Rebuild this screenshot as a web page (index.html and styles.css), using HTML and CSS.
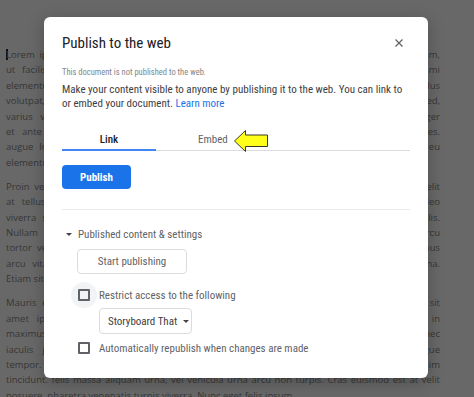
FILE: index.html
```html
<!DOCTYPE html>
<html lang="en">
<head>
  <meta charset="UTF-8">
  <meta name="viewport" content="width=device-width, initial-scale=1.0">
  <title>Publish to the web</title>
  <link rel="stylesheet" href="styles.css">
</head>
<body>
  <div class="doc">
    <p>
      <span class="ln"><span class="cursor"></span>Lorem ipsum dolor sit amet, consectetur adipiscing elit. Nam tincidunt leo vel nunc condim,</span>
      <span class="ln">ut facilisis ligula tristique. Vivamus sagittis dui nec justo faucibus, quis posuere nisl mi</span>
      <span class="ln">elementum. Donec a sapien non massa interdum ullamcorper in et nunc. Cras porttitor tellus</span>
      <span class="ln">volutpat, ut aliquet mauris pellentesque. Suspendisse potenti. Integer ligula vitae orci sed,</span>
      <span class="ln">varius vitae magna. Pellentesque habitant morbi tristique senectus et netus et integer</span>
      <span class="ln">et ante sit amet libero commodo viverra. Praesent dictum rhoncus lorem, et ultricies.</span>
      <span class="ln">augue lorem, sagittis vel aliquet in, fringilla at nunc. Sed eu enim vel sem tempor id eu</span>
      <span class="ln last">elementum nisi.</span>
    </p>
    <p>
      <span class="ln">Proin vel massa eu nisi dictum pulvinar. Maecenas iaculis libero eu magna, non pretium elit</span>
      <span class="ln">at tellus sodales. Morbi consequat dui ut metus vulputate, vitae ultrices felis vitae leo</span>
      <span class="ln">viverra sem. Quisque eleifend augue non lorem venenatis, et vestibulum mi. Nam mollis.</span>
      <span class="ln">Nullam ac posuere neque. Duis vitae sapien a lectus sodales euismod, id volutpat arcu</span>
      <span class="ln">tortor vel dolor. Curabitur nec lacus sed erat tincidunt dictum. Sed vitae augue non finibus</span>
      <span class="ln">arcu vitae nulla. Aliquam erat volutpat. Integer eget sem in nibh fermentum ut magna.</span>
      <span class="ln last">Etiam sit amet dictum ipsum.</span>
    </p>
    <p>
      <span class="ln">Mauris euismod, turpis vitae ullamcorper placerat, nibh quam tristique est, vitae dolor sit</span>
      <span class="ln">amet ipsum. Sed quis nisi at velit scelerisque venenatis. Nulla facilisi. Fusce sem in</span>
      <span class="ln">maximus nunc. Phasellus condimentum orci non justo gravida, in cursus enim. Donec</span>
      <span class="ln">iaculis justo vitae tellus consequat, sed ultricies mi porta. In hac habitasse augue</span>
      <span class="ln">tempor. Vivamus dignissim lectus vel urna lacinia, vitae euismod lectus. Aenean dignissim</span>
      <span class="ln">tincidunt. felis massa aliquam urna, vel vehicula urna arcu non turpis. Cras euismod est at velit</span>
      <span class="ln last">posuere, pharetra venenatis turpis viverra. Nunc eget felis ipsum.</span>
    </p>
  </div>

  <div class="dialog">
    <div class="dialog-header">
      <h1>Publish to the web</h1>
      <button class="close-btn" aria-label="Close">
        <svg width="8" height="8" viewBox="0 0 8 8"><path d="M0.5 0.5 L7.5 7.5 M7.5 0.5 L0.5 7.5" stroke="#5f6368" stroke-width="1.3" fill="none"/></svg>
      </button>
    </div>
    <div class="notice">This document is not published to the web.</div>
    <p class="desc">Make your content visible to anyone by publishing it to the web. You can link to or embed your document. <a href="#">Learn more</a></p>

    <div class="tabs">
      <div class="tab active">Link</div>
      <div class="tab">Embed</div>
    </div>

    <button class="publish-btn">Publish</button>

    <div class="divider"></div>

    <div class="section-title"><span class="caret"></span>Published content &amp; settings</div>
    <button class="outline-btn">Start publishing</button>

    <label class="check-row">
      <span class="check-ripple hover"><span class="box"></span></span>
      <span>Restrict access to the following</span>
    </label>
    <div class="select">Storyboard That <span class="caret"></span></div>
    <label class="check-row">
      <span class="check-ripple"><span class="box"></span></span>
      <span>Automatically republish when changes are made</span>
    </label>

    <!-- annotation arrow from the screenshot -->
    <svg class="pointer" width="38" height="26" viewBox="0 0 38 26">
      <polygon points="1.5,12 12.5,1.5 12.5,6 34.5,6 34.5,17.5 12.5,17.5 12.5,22.5" fill="#ffff1a" stroke="#3a3a2a" stroke-width="1"/>
    </svg>
  </div>
</body>
</html>
```
FILE: styles.css
```css
:root {
  --blue: #1a73e8;
  --text-dark: #202124;
  --text: #3c4043;
  --text-muted: #5f6368;
  --border: #dadce0;
}

body {
  margin: 0;
  background-color: #686868;
  font-family: 'Open Sans', 'Liberation Sans', sans-serif;
  overflow: hidden;
}

/* dimmed document behind the dialog */
.doc {
  width: 434px;
  padding: 47px 0 0 6px;
  color: #363636;
  font-size: 9.5px;
  font-stretch: 88%;
  line-height: 15.4px;
}
.doc p {
  margin: 0 0 8.6px 0;
}
.doc .ln {
  display: block;
  white-space: nowrap;
  overflow: hidden;
  text-align: justify;
  text-align-last: justify;
}
.doc .ln.last {
  text-align-last: left;
}
.cursor {
  display: inline-block;
  width: 2px;
  height: 11px;
  margin-right: -2px;
  vertical-align: -2px;
  background-color: #111;
}

/* dialog */
.dialog {
  position: absolute;
  left: 44px;
  top: 17px;
  width: 384px;
  height: 361px;
  box-sizing: border-box;
  padding: 0 18px 0 18px;
  background-color: #fff;
  border-radius: 6px;
  box-shadow: 0 4px 16px rgba(0, 0, 0, 0.25);
  font-family: Roboto, 'Liberation Sans', sans-serif;
  font-stretch: 75%;
  color: var(--text);
}

.dialog-header {
  display: flex;
  align-items: center;
  justify-content: space-between;
  margin-top: 14px;
  height: 24px;
}
.dialog-header h1 {
  margin: 0;
  font-size: 15px;
  font-weight: 400;
  color: var(--text-dark);
}
.close-btn {
  border: none;
  background: none;
  padding: 0;
  margin-right: 7px;
  width: 8px;
  height: 8px;
  display: flex;
}

.notice {
  margin-top: 11px;
  font-size: 8.5px;
  line-height: 12px;
  color: #80868b;
}

.desc {
  margin: 5px 0 0 0;
  font-size: 11px;
  line-height: 13.5px;
}
.desc a {
  color: var(--blue);
  text-decoration: none;
}

.tabs {
  display: flex;
  margin-top: 20px;
  border-bottom: 1px solid var(--border);
}
.tab {
  padding: 2px 0 2px 0;
  font-size: 11px;
  line-height: 16px;
  color: var(--text-muted);
}
.tab.active {
  width: 94px;
  text-align: center;
  color: var(--text-dark);
  font-weight: 500;
  border-bottom: 2px solid #4285f4;
  margin-bottom: -1px;
  padding-bottom: 1px;
}
.tab + .tab {
  padding-left: 42px;
}

.publish-btn {
  display: block;
  margin-top: 14px;
  width: 69px;
  height: 24px;
  border: none;
  border-radius: 4px;
  background-color: var(--blue);
  color: #fff;
  font-family: inherit;
  font-stretch: 75%;
  font-size: 11px;
  font-weight: 700;
}

.divider {
  margin-top: 20px;
  height: 1px;
  background-color: #e8eaed;
}

.section-title {
  display: flex;
  align-items: center;
  margin-top: 16px;
  height: 16px;
  font-size: 11px;
  color: var(--text-muted);
}
.caret {
  display: inline-block;
  width: 0;
  height: 0;
  border-left: 3px solid transparent;
  border-right: 3px solid transparent;
  border-top: 3px solid #444;
}
.section-title .caret {
  margin: 0 6px 0 4px;
}

.outline-btn {
  display: block;
  margin: 7px 0 0 15px;
  width: 110px;
  height: 25px;
  border: 1px solid var(--border);
  border-radius: 4px;
  background-color: #fff;
  color: var(--text-muted);
  font-family: inherit;
  font-stretch: 75%;
  font-size: 11px;
}

.check-row {
  display: flex;
  align-items: center;
  gap: 2px;
  margin-left: 9px;
  height: 26px;
  font-size: 11px;
  color: var(--text-muted);
}
.check-row:first-of-type {
  margin-top: 8px;
}
.check-ripple {
  display: flex;
  align-items: center;
  justify-content: center;
  width: 26px;
  height: 26px;
  border-radius: 50%;
}
.check-ripple.hover {
  background-color: #f1f3f4;
}
.box {
  width: 8px;
  height: 8px;
  border: 2px solid #5f6368;
  border-radius: 1px;
}

.select {
  display: flex;
  align-items: center;
  box-sizing: border-box;
  width: 93px;
  height: 26px;
  margin-left: 37px;
  padding: 0 0 0 8px;
  border: 1px solid var(--border);
  border-radius: 4px;
  font-size: 11px;
  color: var(--text);
}
.select .caret {
  margin-left: 6px;
}
.select + .check-row {
  margin-top: 1px;
}

.pointer {
  position: absolute;
  left: 189px;
  top: 112px;
}
```
